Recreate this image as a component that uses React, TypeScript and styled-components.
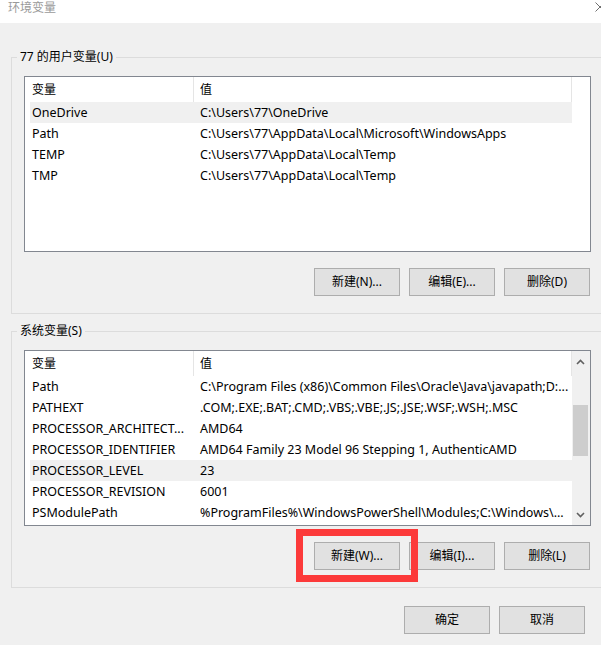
import React from 'react';
import styled, { createGlobalStyle } from 'styled-components';

const GlobalStyle = createGlobalStyle`
  html, body {
    margin: 0;
    padding: 0;
    background: #f0f0f0;
    overflow: hidden;
  }
  body {
    font-family: "Noto Sans", "Noto Sans CJK SC", sans-serif;
    font-size: 12px;
    color: #000;
  }
`;

const Dialog = styled.div`
  width: 615px;
  height: 645px;
  background: #f0f0f0;
  display: flex;
  flex-direction: column;
`;

const TitleBar = styled.div`
  height: 23px;
  background: #fff;
  display: flex;
  justify-content: space-between;
  align-items: flex-start;
  padding: 1px 0 0 8px;
  box-sizing: border-box;
`;

const Title = styled.span`
  color: #9a9a9a;
  line-height: 13px;
  font-size: 12px;
`;

const CloseIcon = styled.svg`
  margin: 1px 10px 0 0;
`;

const Content = styled.div`
  padding-left: 11px;
  width: 593px;
  display: flex;
  flex-direction: column;
`;

const Group = styled.section<{ $top: number }>`
  margin-top: ${(p) => p.$top}px;
  border: 1px solid #dcdcdc;
  padding: 0 12px 17px;
  display: flex;
  flex-direction: column;
  box-sizing: border-box;
  width: 593px;
`;

const Legend = styled.div`
  align-self: flex-start;
  margin: -8px 0 0 -7px;
  padding: 0 3px;
  line-height: 14px;
  background: #f0f0f0;
`;

const ListBox = styled.div`
  margin-top: 12px;
  height: 176px;
  border: 1px solid #828790;
  background: #fff;
  box-sizing: border-box;
  display: flex;
  overflow: hidden;
`;

const ListMain = styled.div`
  flex: 1;
  display: flex;
  flex-direction: column;
  overflow: hidden;
`;

const HeaderRow = styled.div`
  display: flex;
  height: 25px;
  flex-shrink: 0;
`;

const HeaderCell = styled.div<{ $width?: number }>`
  ${(p) => (p.$width ? `width: ${p.$width}px;` : 'flex: 1;')}
  flex-shrink: 0;
  box-sizing: border-box;
  padding-left: ${(p) => (p.$width ? 7 : 6)}px;
  line-height: 25px;
  border-right: 1px solid #e5e5e5;
`;

const Row = styled.div<{ $selected?: boolean }>`
  display: flex;
  margin-left: 5px;
  height: 21px;
  line-height: 21px;
  flex-shrink: 0;
  font-size: 12.5px;
  background: ${(p) => (p.$selected ? '#f0f0f0' : 'transparent')};
`;

const NameCell = styled.div`
  width: 163px;
  flex-shrink: 0;
  padding-left: 2px;
  box-sizing: border-box;
  white-space: nowrap;
  overflow: hidden;
`;

const ValueCell = styled.div`
  flex: 1;
  padding-left: 7px;
  white-space: nowrap;
  overflow: hidden;
`;

const Gutter = styled.div`
  width: 18px;
  flex-shrink: 0;
  background: #fff;
`;

const ScrollBar = styled.div`
  width: 18px;
  flex-shrink: 0;
  background: #f0f0f0;
  display: flex;
  flex-direction: column;
`;

const ArrowBox = styled.div`
  height: 21px;
  display: flex;
  align-items: center;
  justify-content: center;
  padding-right: 1px;
`;

const Track = styled.div`
  flex: 1;
`;

const Thumb = styled.div`
  margin: 33px 2px 0 1px;
  height: 51px;
  background: #cdcdcd;
`;

const ButtonRow = styled.div`
  margin-top: 16px;
  padding-right: 1px;
  display: flex;
  justify-content: flex-end;
  gap: 9px;
`;

const Button = styled.button`
  width: 86px;
  height: 28px;
  padding: 0;
  background: #e1e1e1;
  border: 1px solid #adadad;
  font-family: "Noto Sans", "Noto Sans CJK SC", sans-serif;
  font-size: 12px;
  color: #000;
  line-height: 26px;
`;

const Highlight = styled.div`
  position: relative;
  z-index: 1;
`;

const RedFrame = styled.div`
  position: absolute;
  top: -13px;
  bottom: -12px;
  left: -18px;
  right: -18px;
  border: 7px solid #fc3a3a;
  pointer-events: none;
`;

const Footer = styled.div`
  margin-top: 18px;
  padding-right: 19px;
  display: flex;
  justify-content: flex-end;
  gap: 9px;
`;

type EnvVar = { name: string; value: string; selected?: boolean };

const userVars: EnvVar[] = [
  { name: 'OneDrive', value: 'C:\\Users\\77\\OneDrive', selected: true },
  { name: 'Path', value: 'C:\\Users\\77\\AppData\\Local\\Microsoft\\WindowsApps' },
  { name: 'TEMP', value: 'C:\\Users\\77\\AppData\\Local\\Temp' },
  { name: 'TMP', value: 'C:\\Users\\77\\AppData\\Local\\Temp' },
];

const systemVars: EnvVar[] = [
  { name: 'Path', value: 'C:\\Program Files (x86)\\Common Files\\Oracle\\Java\\javapath;D:...' },
  { name: 'PATHEXT', value: '.COM;.EXE;.BAT;.CMD;.VBS;.VBE;.JS;.JSE;.WSF;.WSH;.MSC' },
  { name: 'PROCESSOR_ARCHITECT...', value: 'AMD64' },
  { name: 'PROCESSOR_IDENTIFIER', value: 'AMD64 Family 23 Model 96 Stepping 1, AuthenticAMD' },
  { name: 'PROCESSOR_LEVEL', value: '23', selected: true },
  { name: 'PROCESSOR_REVISION', value: '6001' },
  { name: 'PSModulePath', value: '%ProgramFiles%\\WindowsPowerShell\\Modules;C:\\Windows\\...' },
];

const Chevron: React.FC<{ down?: boolean }> = ({ down }) => (
  <svg width="9" height="6" viewBox="0 0 9 6">
    <path
      d={down ? 'M1 1 L4.5 4.5 L8 1' : 'M1 5 L4.5 1.5 L8 5'}
      fill="none"
      stroke="#606060"
      strokeWidth="1.6"
    />
  </svg>
);

const VarList: React.FC<{ vars: EnvVar[]; scroll?: boolean }> = ({ vars, scroll }) => (
  <ListBox>
    <ListMain>
      <HeaderRow>
        <HeaderCell $width={169}>变量</HeaderCell>
        <HeaderCell>值</HeaderCell>
      </HeaderRow>
      {vars.map((v) => (
        <Row key={v.name + v.value} $selected={v.selected}>
          <NameCell>{v.name}</NameCell>
          <ValueCell>{v.value}</ValueCell>
        </Row>
      ))}
    </ListMain>
    {scroll ? (
      <ScrollBar>
        <ArrowBox>
          <Chevron />
        </ArrowBox>
        <Track>
          <Thumb />
        </Track>
        <ArrowBox>
          <Chevron down />
        </ArrowBox>
      </ScrollBar>
    ) : (
      <Gutter />
    )}
  </ListBox>
);

const App: React.FC = () => {
  return (
    <>
      <GlobalStyle />
      <Dialog>
        <TitleBar>
          <Title>环境变量</Title>
          <CloseIcon width="10" height="10" viewBox="0 0 10 10">
            <path d="M0.5 0.5 L9.5 9.5 M9.5 0.5 L0.5 9.5" stroke="#707070" strokeWidth="1" />
          </CloseIcon>
        </TitleBar>
        <Content>
          <Group $top={34}>
            <Legend>77 的用户变量(U)</Legend>
            <VarList vars={userVars} />
            <ButtonRow>
              <Button>新建(N)...</Button>
              <Button>编辑(E)...</Button>
              <Button>删除(D)</Button>
            </ButtonRow>
          </Group>
          <Group $top={17}>
            <Legend>系统变量(S)</Legend>
            <VarList vars={systemVars} scroll />
            <ButtonRow>
              <Highlight>
                <Button>新建(W)...</Button>
                <RedFrame />
              </Highlight>
              <Button>编辑(I)...</Button>
              <Button>删除(L)</Button>
            </ButtonRow>
          </Group>
          <Footer>
            <Button>确定</Button>
            <Button>取消</Button>
          </Footer>
        </Content>
      </Dialog>
    </>
  );
};

export default App;
